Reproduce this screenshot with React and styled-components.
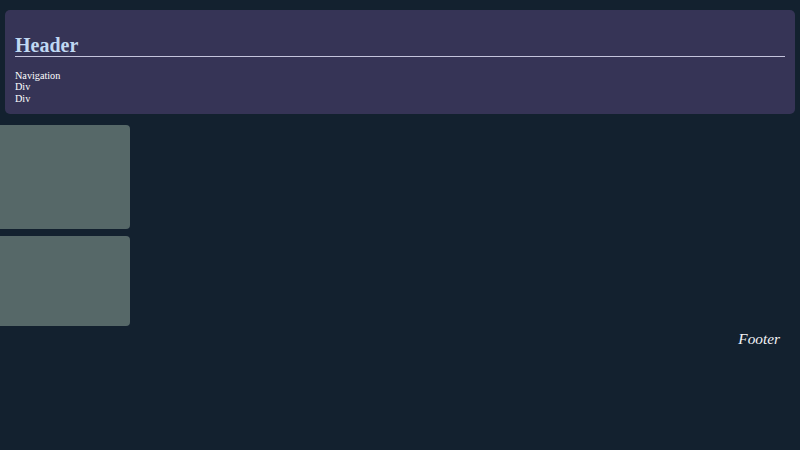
import React from "react";
import styled, { createGlobalStyle } from "styled-components";

const Global = createGlobalStyle`
  html, body { margin: 0; padding: 0; background: #13212f; }
  body { font-family: "Liberation Serif", "Times New Roman", serif; color: #f0f0f4; }
  #root { width: 800px; height: 450px; }
`;

const Page = styled.div`
  display: flex;
  flex-direction: column;
  padding: 10px 5px 0;
`;

const HeaderBox = styled.header`
  background: #363456;
  border-radius: 5px;
  padding: 24px 10px 10px;
  display: flex;
  flex-direction: column;
  gap: 13px;
`;

const Title = styled.h1`
  margin: 0;
  font-size: 20px;
  line-height: 22px;
  font-weight: bold;
  color: #c0d8f2;
  border-bottom: 1px solid #c4c4dc;
`;

const Nav = styled.nav`
  display: flex;
  flex-direction: column;
  font-size: 10.2px;
  line-height: 11.3px;
  color: #ffffff;
`;

const Cards = styled.div`
  display: flex;
  flex-direction: column;
  gap: 7px;
  margin: 11px 0 0 -10px;
`;

const Card = styled.div`
  width: 135px;
  height: ${(p) => p.$h}px;
  background: #566868;
  border-radius: 4px;
`;

const Footer = styled.footer`
  align-self: flex-end;
  margin: 4px 15px 0 0;
  font-style: italic;
  font-size: 15.3px;
  line-height: 18px;
  color: #f4f4f8;
`;

export default function App() {
  return (
    <>
      <Global />
      <Page>
        <HeaderBox>
          <Title>Header</Title>
          <Nav>
            <div>Navigation</div>
            <div>Div</div>
            <div>Div</div>
          </Nav>
        </HeaderBox>
        <Cards>
          <Card $h={104} />
          <Card $h={90} />
        </Cards>
        <Footer>Footer</Footer>
      </Page>
    </>
  );
}
